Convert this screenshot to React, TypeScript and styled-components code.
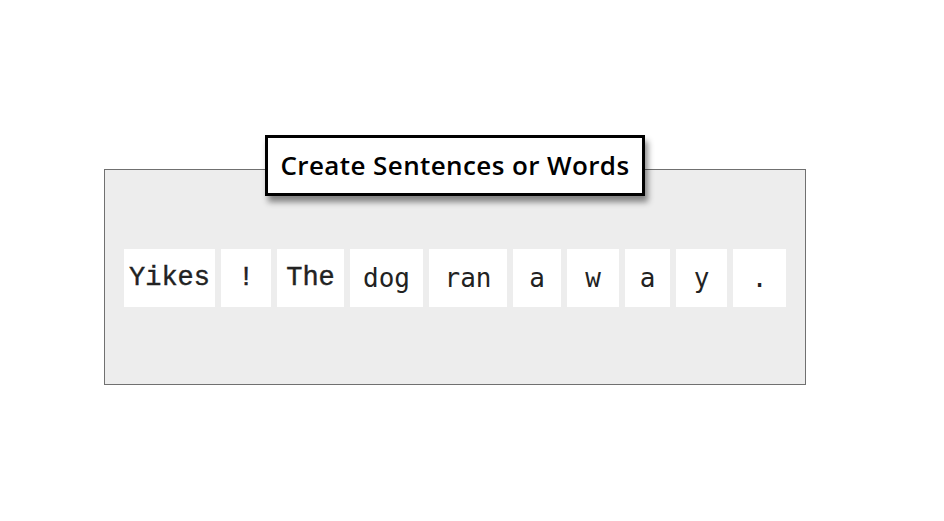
import React, { FC } from "react";
import styled, { createGlobalStyle } from "styled-components";

interface IWord {
  text: string;
  width: number;
  serif?: boolean;
}

const words: IWord[] = [
  { text: "Yikes", width: 91, serif: true },
  { text: "!", width: 50, serif: true },
  { text: "The", width: 67, serif: true },
  { text: "dog", width: 73 },
  { text: "ran", width: 78 },
  { text: "a", width: 48 },
  { text: "w", width: 52 },
  { text: "a", width: 45 },
  { text: "y", width: 51 },
  { text: ".", width: 53 },
];

const App: FC = () => {
  return (
    <Page>
      <GlobalStyle />
      <Panel>
        <Title>Create Sentences or Words</Title>
        <WordRow>
          {words.map((word, i) => (
            <Tile key={i} $width={word.width} $serif={word.serif}>
              {word.text}
            </Tile>
          ))}
        </WordRow>
      </Panel>
    </Page>
  );
};

export default App;

const GlobalStyle = createGlobalStyle`
  body {
    margin: 0;
    background: #ffffff;
  }
`;

const Page = styled.div`
  padding: 169px 0 0 104px;
  height: 521px;
  box-sizing: border-box;
`;

const Panel = styled.div`
  display: flex;
  flex-direction: column;
  width: 702px;
  height: 216px;
  box-sizing: border-box;
  background-color: #ededed;
  border: 1px solid #707070;
`;

const Title = styled.div`
  align-self: center;
  width: 380px;
  height: 61px;
  margin-top: -35px;
  box-sizing: border-box;
  display: flex;
  align-items: center;
  justify-content: center;
  background-color: #ffffff;
  border: 3px solid #000000;
  box-shadow: 3px 6px 6px rgba(0, 0, 0, 0.45);
  font-family: "Comic Sans MS", "Open Sans", sans-serif;
  font-weight: 600;
  font-size: 26px;
  letter-spacing: 0.4px;
  color: #000000;
  padding-bottom: 2px;
`;

const WordRow = styled.div`
  display: flex;
  gap: 6px;
  margin-top: 53px;
  padding-left: 19px;
`;

const Tile = styled.div<{ $width: number; $serif?: boolean }>`
  width: ${(p) => p.$width}px;
  height: 58px;
  display: flex;
  align-items: center;
  justify-content: center;
  background-color: #ffffff;
  color: #222222;
  font-family: ${(p) =>
    p.$serif ? `"Liberation Mono", monospace` : `"DejaVu Sans Mono", monospace`};
  font-size: ${(p) => (p.$serif ? 27 : 26)}px;
  -webkit-text-stroke: ${(p) => (p.$serif ? "0.4px #222222" : "0")};
`;
